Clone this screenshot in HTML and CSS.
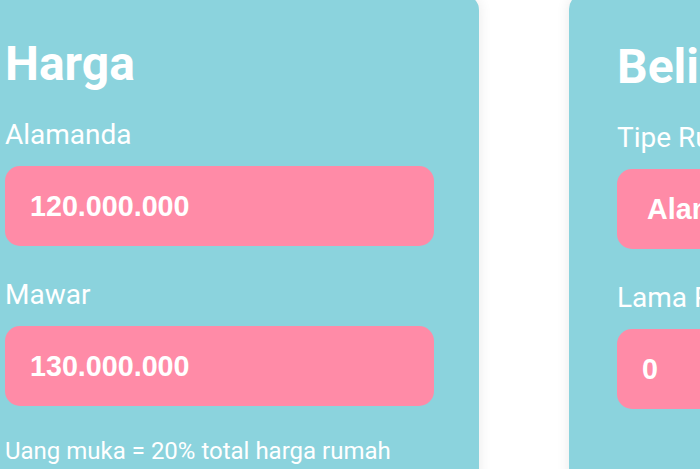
FILE: index.html
```html
<!DOCTYPE html>
<html lang="id">
<head>
<meta charset="utf-8">
<title>Harga Rumah</title>
<link rel="stylesheet" href="styles.css">
</head>
<body>
<main class="cards">
  <section class="card">
    <h1 class="card-title">Harga</h1>
    <label class="field-label" for="alamanda">Alamanda</label>
    <input class="field" id="alamanda" type="text" value="120.000.000" readonly>
    <label class="field-label field-label--spaced" for="mawar">Mawar</label>
    <input class="field" id="mawar" type="text" value="130.000.000" readonly>
    <p class="note">Uang muka = 20% total harga rumah</p>
  </section>
  <section class="card card--offset">
    <h1 class="card-title">Beli</h1>
    <label class="field-label" for="tipe">Tipe Rumah</label>
    <select class="field field--select" id="tipe">
      <option>Alamanda</option>
      <option>Mawar</option>
    </select>
    <label class="field-label field-label--spaced" for="lama">Lama Pinjaman</label>
    <input class="field" id="lama" type="text" value="0">
  </section>
</main>
</body>
</html>
```

FILE: styles.css
```css
* {
  box-sizing: border-box;
}

html, body {
  margin: 0;
  padding: 0;
  background: #ffffff;
  overflow: hidden;
}

body {
  font-family: Roboto, "Liberation Sans", sans-serif;
  color: #ffffff;
}

.cards {
  display: flex;
  gap: 90px;
  margin-left: -43px;
  margin-top: -5px;
}

.card {
  flex: 0 0 522px;
  width: 522px;
  min-height: 620px;
  background: #8bd3dd;
  border-radius: 15px;
  padding: 40px 45px 40px 48px;
  display: flex;
  flex-direction: column;
  box-shadow: 0 0 14px rgba(0, 0, 0, 0.09);
}

.card--offset {
  margin-top: -1px;
  padding-top: 44px;
}

.card-title {
  margin: 0 0 26px;
  font-size: 48px;
  font-weight: 700;
  line-height: normal;
}

.field-label {
  display: block;
  font-size: 28px;
  font-weight: 400;
  line-height: normal;
  margin-bottom: 15px;
}

.field-label--spaced {
  margin-top: 32px;
}

.field {
  display: block;
  width: 429px;
  height: 80px;
  flex: 0 0 80px;
  border: none;
  border-radius: 15px;
  background: #ff8ba7;
  color: #ffffff;
  font-family: "Liberation Sans", Arial, sans-serif;
  font-weight: 700;
  font-size: 28.7px;
  padding: 0 25px;
  outline: none;
  appearance: none;
  -webkit-appearance: none;
}

.field--select {
  padding-left: 30px;
}

.note {
  margin: 31px 0 0;
  font-size: 24px;
  line-height: normal;
}
```
